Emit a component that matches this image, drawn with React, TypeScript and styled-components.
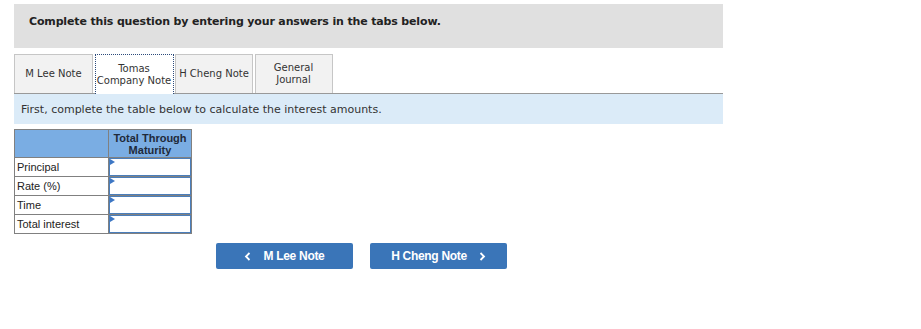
import styled, { createGlobalStyle } from "styled-components";

const GlobalStyle = createGlobalStyle`
  body {
    margin: 0;
    background: #fff;
    font-family: Verdana, "DejaVu Sans", sans-serif;
  }
`;

const Page = styled.div`
  width: 709px;
  padding: 4px 0 0 14px;
`;

const Banner = styled.div`
  background: #e0e0e0;
  height: 44px;
  box-sizing: border-box;
  padding: 11px 15px 0;
  font-size: 11px;
  line-height: 13px;
  letter-spacing: -0.15px;
  font-weight: bold;
  color: #222;
`;

const TabBar = styled.div`
  display: flex;
  gap: 1.5px;
  margin-top: 6px;
  border-bottom: 1px solid #999;
  height: 39px;
`;

const Tab = styled.div<{ $active?: boolean; $w: number }>`
  width: ${(p) => p.$w}px;
  box-sizing: border-box;
  display: flex;
  align-items: center;
  justify-content: center;
  text-align: center;
  font-size: 10px;
  line-height: 12px;
  color: #333;
  background: ${(p) => (p.$active ? "#fff" : "#f2f2f2")};
  border: ${(p) => (p.$active ? "1px dotted #2b4a7a" : "1px solid #c6c6c6")};
  border-bottom: none;
  height: ${(p) => (p.$active ? "40px" : "39px")};
`;

const Instruction = styled.div`
  background: #dbebf8;
  height: 30px;
  padding: 0 7px;
  display: flex;
  align-items: center;
  font-size: 11px;
  color: #333;
`;

const Table = styled.table`
  margin-top: 5px;
  border-collapse: collapse;
  font-family: "Liberation Sans", Arial, sans-serif;
  font-size: 11px;
  color: #222;
`;

const HeadCell = styled.th`
  background: #7aade3;
  border: 1px solid #808080;
  height: 27px;
  padding: 0;
  font-weight: bold;
  line-height: 12px;
  text-align: center;
  color: #1f2a3a;
`;

const Label = styled.td`
  width: 91px;
  height: 18px;
  border: 1px solid #808080;
  padding: 0 0 0 2px;
`;

const InputCell = styled.td`
  width: 82px;
  border: 1px solid #808080;
  padding: 0;
`;

const Field = styled.div`
  position: relative;
  height: 16px;
  border: 1px solid #4a7ebb;
  background: #fff;
  &::before {
    content: "";
    position: absolute;
    left: 0;
    top: 0;
    border-left: 5px solid #3d77c4;
    border-top: 3px solid transparent;
    border-bottom: 3px solid transparent;
  }
`;

const NavRow = styled.div`
  display: flex;
  gap: 17px;
  margin: 9px 0 0 202px;
`;

const NavButton = styled.button`
  width: 137px;
  height: 26px;
  border: none;
  border-radius: 2px;
  background: #3a75b8;
  color: #fff;
  font-family: "Liberation Sans", Arial, sans-serif;
  font-size: 12px;
  font-weight: bold;
  display: flex;
  align-items: center;
  justify-content: center;
  gap: 12px;
  letter-spacing: -0.3px;
`;

const Chevron = styled.svg`
  width: 7px;
  height: 9px;
`;

const rows = ["Principal", "Rate (%)", "Time", "Total interest"];

export default function App() {
  return (
    <Page>
      <GlobalStyle />
      <Banner>Complete this question by entering your answers in the tabs below.</Banner>
      <TabBar>
        <Tab $w={79}>M Lee Note</Tab>
        <Tab $w={79} $active>
          Tomas
          <br />
          Company Note
        </Tab>
        <Tab $w={78}>H Cheng Note</Tab>
        <Tab $w={78}>
          General
          <br />
          Journal
        </Tab>
      </TabBar>
      <Instruction>First, complete the table below to calculate the interest amounts.</Instruction>
      <Table>
        <thead>
          <tr>
            <HeadCell />
            <HeadCell>
              Total Through
              <br />
              Maturity
            </HeadCell>
          </tr>
        </thead>
        <tbody>
          {rows.map((r) => (
            <tr key={r}>
              <Label>{r}</Label>
              <InputCell>
                <Field />
              </InputCell>
            </tr>
          ))}
        </tbody>
      </Table>
      <NavRow>
        <NavButton>
          <Chevron viewBox="0 0 7 9">
            <path d="M5.5 1 L2 4.5 L5.5 8" stroke="#fff" strokeWidth="1.8" fill="none" />
          </Chevron>
          M Lee Note
        </NavButton>
        <NavButton>
          H Cheng Note
          <Chevron viewBox="0 0 7 9">
            <path d="M1.5 1 L5 4.5 L1.5 8" stroke="#fff" strokeWidth="1.8" fill="none" />
          </Chevron>
        </NavButton>
      </NavRow>
    </Page>
  );
}
